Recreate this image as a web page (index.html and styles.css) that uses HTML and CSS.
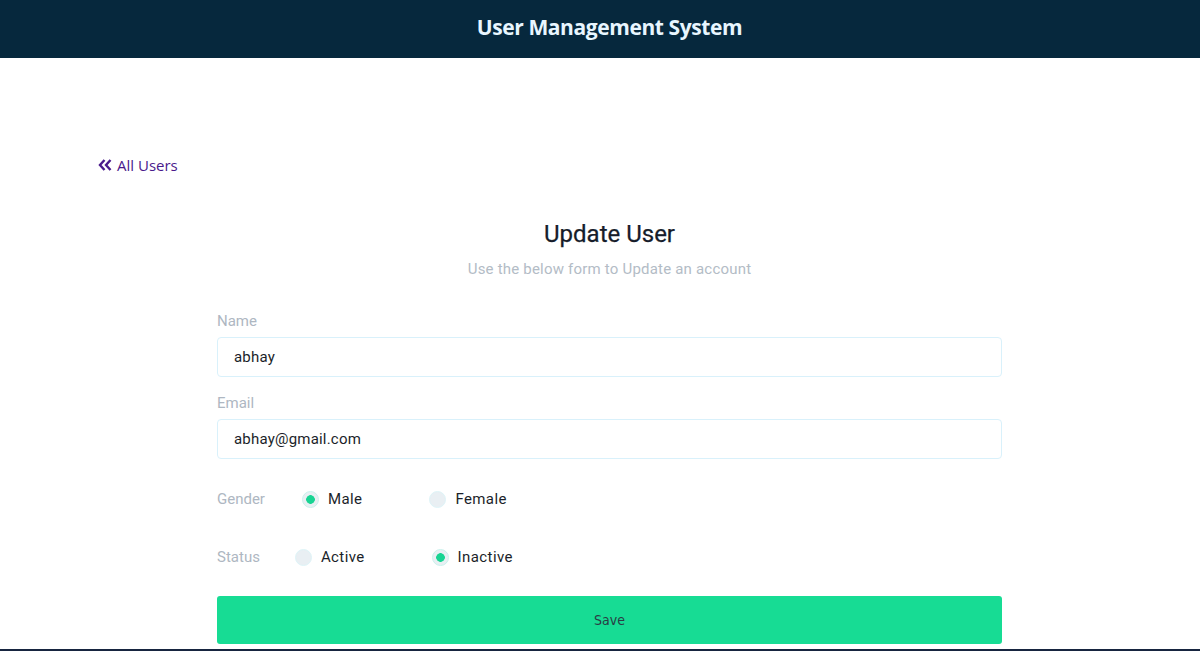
FILE: index.html
```html
<!DOCTYPE html>
<html lang="en">
<head>
<meta charset="utf-8">
<title>User Management System</title>
<link rel="stylesheet" href="styles.css">
</head>
<body>
<div class="page">
  <header class="topbar">
    <h1 class="brand">User Management System</h1>
  </header>
  <main class="main">
    <a class="back" href="#">
      <svg class="back-icon" viewBox="0 0 14 12" width="14" height="12" aria-hidden="true">
        <path d="M6.5 1 L2 6 L6.5 11 M12.5 1 L8 6 L12.5 11" fill="none" stroke="currentColor" stroke-width="2.4" stroke-linejoin="miter"/>
      </svg>
      <span>All Users</span>
    </a>
    <section class="form-wrap">
      <h2 class="title">Update User</h2>
      <p class="subtitle">Use the below form to Update an account</p>
      <form class="form">
        <div class="field">
          <label class="label" for="name">Name</label>
          <input class="input" id="name" type="text" value="abhay">
        </div>
        <div class="field">
          <label class="label" for="email">Email</label>
          <input class="input" id="email" type="text" value="abhay@gmail.com">
        </div>
        <div class="radio-row gender-row">
          <span class="label row-label">Gender</span>
          <label class="option"><input class="radio" type="radio" name="gender" checked><span>Male</span></label>
          <label class="option"><input class="radio" type="radio" name="gender"><span>Female</span></label>
        </div>
        <div class="radio-row status-row">
          <span class="label row-label">Status</span>
          <label class="option"><input class="radio" type="radio" name="status"><span>Active</span></label>
          <label class="option"><input class="radio" type="radio" name="status" checked><span>Inactive</span></label>
        </div>
        <button class="save" type="button">Save</button>
      </form>
    </section>
  </main>
  <footer class="footer"></footer>
</div>
</body>
</html>
```

FILE: styles.css
```css
* { box-sizing: border-box; }
html, body { margin: 0; padding: 0; }
body {
  overflow: hidden;
  background: #fff;
  font-family: Roboto, "Noto Sans", sans-serif;
}
.page {
  width: 1219px;
  height: 651px;
  display: flex;
  flex-direction: column;
}
.topbar {
  height: 58px;
  padding-bottom: 5px;
  background: #06283d;
  display: flex;
  align-items: center;
  justify-content: center;
}
.brand {
  margin: 0;
  font-family: "Open Sans", sans-serif;
  font-weight: 700;
  font-size: 21px;
  letter-spacing: -0.4px;
  color: #e8f6ff;
}
.main {
  flex: 1;
  padding: 97px 0 0 98px;
}
.back {
  display: inline-flex;
  align-items: center;
  gap: 5px;
  color: #4a1a8c;
  text-decoration: none;
  font-family: "Open Sans", sans-serif;
  font-size: 15px;
}
.back-icon { display: block; }
.form-wrap {
  width: 785px;
  margin: 44px 0 0 119px;
  display: flex;
  flex-direction: column;
}
.title {
  margin: 0;
  text-align: center;
  font-size: 24px;
  font-weight: 400;
  color: #161c2a;
  line-height: 30px;
  -webkit-text-stroke: 0.25px #161c2a;
}
.subtitle {
  margin: 10px 0 0;
  text-align: center;
  font-size: 15px;
  letter-spacing: 0.2px;
  color: #b3bcc6;
  line-height: 20px;
}
.form {
  margin-top: 32px;
  display: flex;
  flex-direction: column;
}
.field {
  display: flex;
  flex-direction: column;
  margin-bottom: 16px;
}
.label {
  font-size: 15px;
  color: #aeb7c2;
  line-height: 20px;
}
.field .label { margin-bottom: 6px; }
.input {
  height: 40px;
  border: 1px solid #d9f1fb;
  border-radius: 4px;
  padding: 0 16px;
  font-family: Roboto, sans-serif;
  font-size: 15px;
  letter-spacing: 0.2px;
  color: #1b1f2a;
  outline: none;
}
.radio-row {
  display: flex;
  align-items: center;
  height: 20px;
}
.gender-row { margin-top: 14px; }
.status-row { margin-top: 38px; }
.row-label { margin-right: 37px; }
.status-row .row-label { margin-right: 35px; }
.option {
  display: inline-flex;
  align-items: center;
  gap: 9px;
  margin-right: 67px;
  font-size: 15px;
  letter-spacing: 0.4px;
  color: #1b1f2a;
}
.radio {
  appearance: none;
  -webkit-appearance: none;
  margin: 0;
  width: 17px;
  height: 17px;
  border-radius: 50%;
  background: #e9eff3;
  border: 1px solid #def4f8;
}
.radio:checked {
  background: radial-gradient(circle, #18d493 0 4px, #e9eff3 4.6px);
  border-color: #c9f1ec;
}
.save {
  margin-top: 29px;
  height: 48px;
  border: none;
  border-radius: 3px;
  background: #17dc94;
  color: #2a3d45;
  font-family: "DejaVu Sans Condensed", "DejaVu Sans", sans-serif;
  font-size: 14px;
}
.footer {
  margin-top: auto;
  height: 2px;
  background: #172540;
}
```
